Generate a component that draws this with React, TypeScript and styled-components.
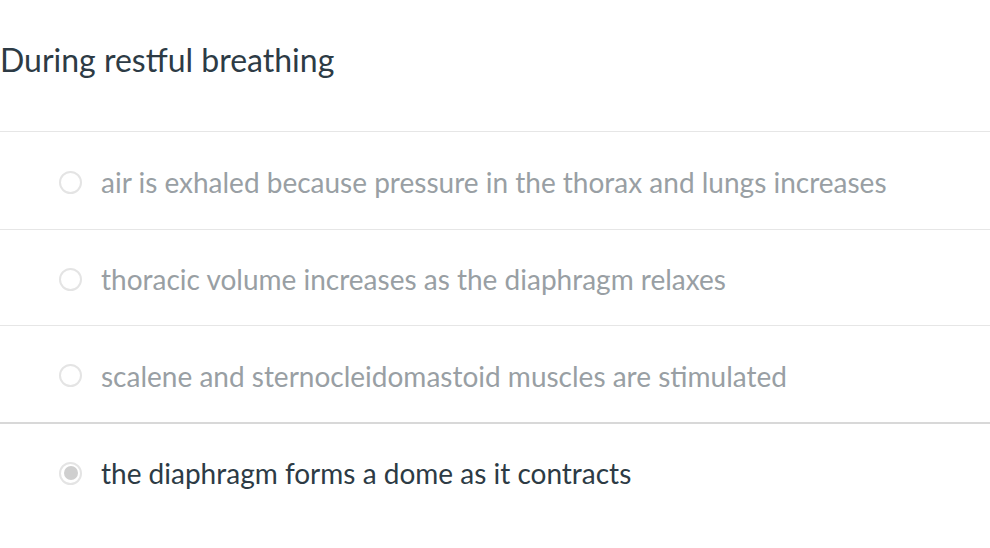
import styled, { createGlobalStyle } from 'styled-components'

const Global = createGlobalStyle`
  body { margin: 0; background: #fff; font-family: Lato, "Open Sans", sans-serif; }
`
const Question = styled.div`
  width: 990px;
`
const Prompt = styled.h2`
  margin: 0; padding: 40px 0 0; height: 131px; box-sizing: border-box;
  font-size: 32px; font-weight: 400; line-height: 40px; color: #2d3b45;
`
const Answers = styled.div`
  display: flex; flex-direction: column;
`
const Answer = styled.label<{ $strong?: boolean }>`
  display: flex; align-items: center; gap: 19px;
  height: 97px; padding: 3px 0 0 59px; box-sizing: border-box;
  border-top: ${({ $strong }) => ($strong ? '2px solid #d8d8d8' : '1px solid #e6e6e6')};
  font-size: 28px; color: ${({ $strong }) => ($strong ? '#2d3b45' : '#999fa4')};
  &:first-child { height: 98px; }
  &:nth-child(2) { height: 96px; }
`
const Radio = styled.span<{ $checked?: boolean }>`
  width: 23px; height: 23px; border-radius: 50%; flex: none; box-sizing: border-box;
  border: 2px solid #e4e4e4; background: #fff;
  display: flex; align-items: center; justify-content: center;
  &::after {
    content: ''; width: 14px; height: 14px; border-radius: 50%;
    background: ${({ $checked }) => ($checked ? '#cfcfcf' : 'transparent')};
  }
`

const options = [
  'air is exhaled because pressure in the thorax and lungs increases',
  'thoracic volume increases as the diaphragm relaxes',
  'scalene and sternocleidomastoid muscles are stimulated',
  'the diaphragm forms a dome as it contracts',
]

export default function App() {
  return (
    <>
      <Global />
      <Question>
        <Prompt>During restful breathing</Prompt>
        <Answers>
          {options.map((o, i) => (
            <Answer key={o} $strong={i === 3}>
              <Radio $checked={i === 3} />
              {o}
            </Answer>
          ))}
        </Answers>
      </Question>
    </>
  )
}
